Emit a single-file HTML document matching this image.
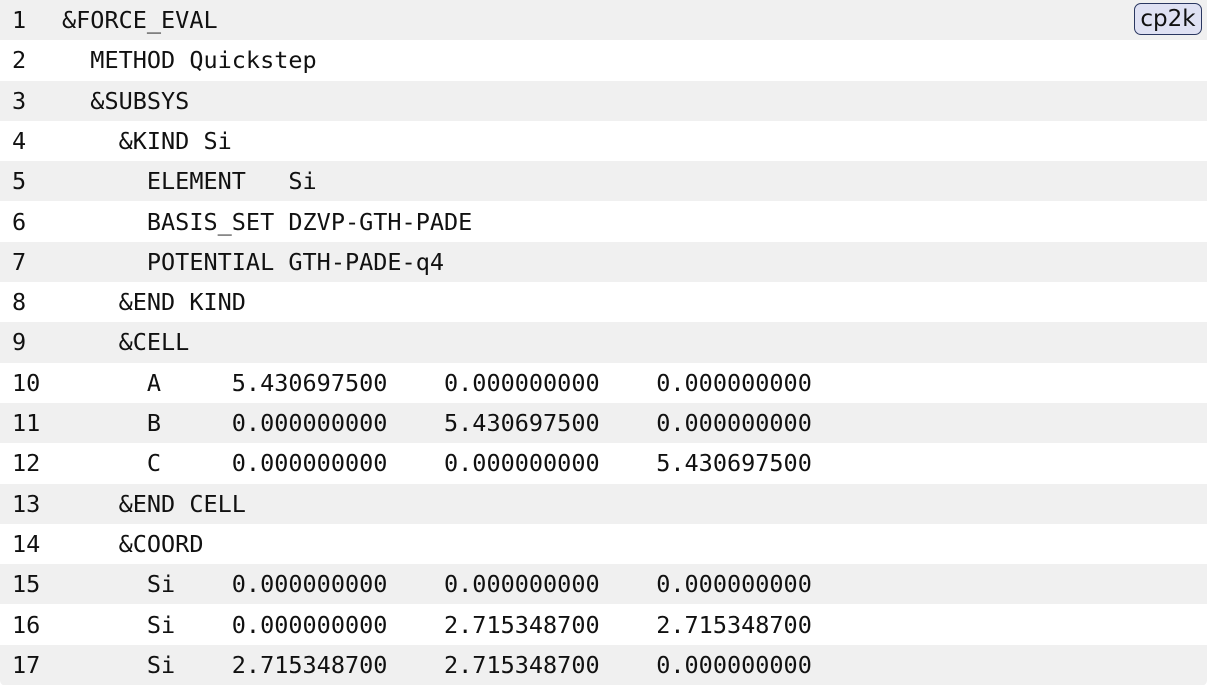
<!DOCTYPE html>
<html><head><meta charset="utf-8"><style>
html,body{margin:0;padding:0;background:#fff;width:1207px;height:688px;overflow:hidden}
.wrap{position:relative;width:1207px;height:686px;border-radius:0 0 6px 6px;overflow:hidden}
.r{position:absolute;left:0;width:1207px;height:40.3px;line-height:40.3px;font-family:"DejaVu Sans Mono","Liberation Mono",monospace;font-size:23.5px;color:#111;white-space:pre}
.r.g{background:#f0f0f0}
.n{position:absolute;left:12px}
.c{position:absolute;left:62px}
.badge{position:absolute;left:1134px;top:3px;width:68px;height:32px;box-sizing:border-box;border:1.5px solid #2a3760;border-radius:7px;background:#dfe1f3;font-family:"DejaVu Sans","Liberation Sans",sans-serif;font-size:23px;line-height:30px;text-align:center;color:#111}
</style></head><body><div class="wrap">
<div class="r g" style="top:0"><span class="n">1</span><span class="c">&amp;FORCE_EVAL</span></div>
<div class="r" style="top:40.3px"><span class="n">2</span><span class="c">  METHOD Quickstep</span></div>
<div class="r g" style="top:80.6px"><span class="n">3</span><span class="c">  &amp;SUBSYS</span></div>
<div class="r" style="top:120.9px"><span class="n">4</span><span class="c">    &amp;KIND Si</span></div>
<div class="r g" style="top:161.2px"><span class="n">5</span><span class="c">      ELEMENT   Si</span></div>
<div class="r" style="top:201.5px"><span class="n">6</span><span class="c">      BASIS_SET DZVP-GTH-PADE</span></div>
<div class="r g" style="top:241.8px"><span class="n">7</span><span class="c">      POTENTIAL GTH-PADE-q4</span></div>
<div class="r" style="top:282.1px"><span class="n">8</span><span class="c">    &amp;END KIND</span></div>
<div class="r g" style="top:322.4px"><span class="n">9</span><span class="c">    &amp;CELL</span></div>
<div class="r" style="top:362.7px"><span class="n">10</span><span class="c">      A     5.430697500    0.000000000    0.000000000</span></div>
<div class="r g" style="top:403px"><span class="n">11</span><span class="c">      B     0.000000000    5.430697500    0.000000000</span></div>
<div class="r" style="top:443.3px"><span class="n">12</span><span class="c">      C     0.000000000    0.000000000    5.430697500</span></div>
<div class="r g" style="top:483.6px"><span class="n">13</span><span class="c">    &amp;END CELL</span></div>
<div class="r" style="top:523.9px"><span class="n">14</span><span class="c">    &amp;COORD</span></div>
<div class="r g" style="top:564.2px"><span class="n">15</span><span class="c">      Si    0.000000000    0.000000000    0.000000000</span></div>
<div class="r" style="top:604.5px"><span class="n">16</span><span class="c">      Si    0.000000000    2.715348700    2.715348700</span></div>
<div class="r g" style="top:644.8px"><span class="n">17</span><span class="c">      Si    2.715348700    2.715348700    0.000000000</span></div>
<div class="badge">cp2k</div>
</div></body></html>
